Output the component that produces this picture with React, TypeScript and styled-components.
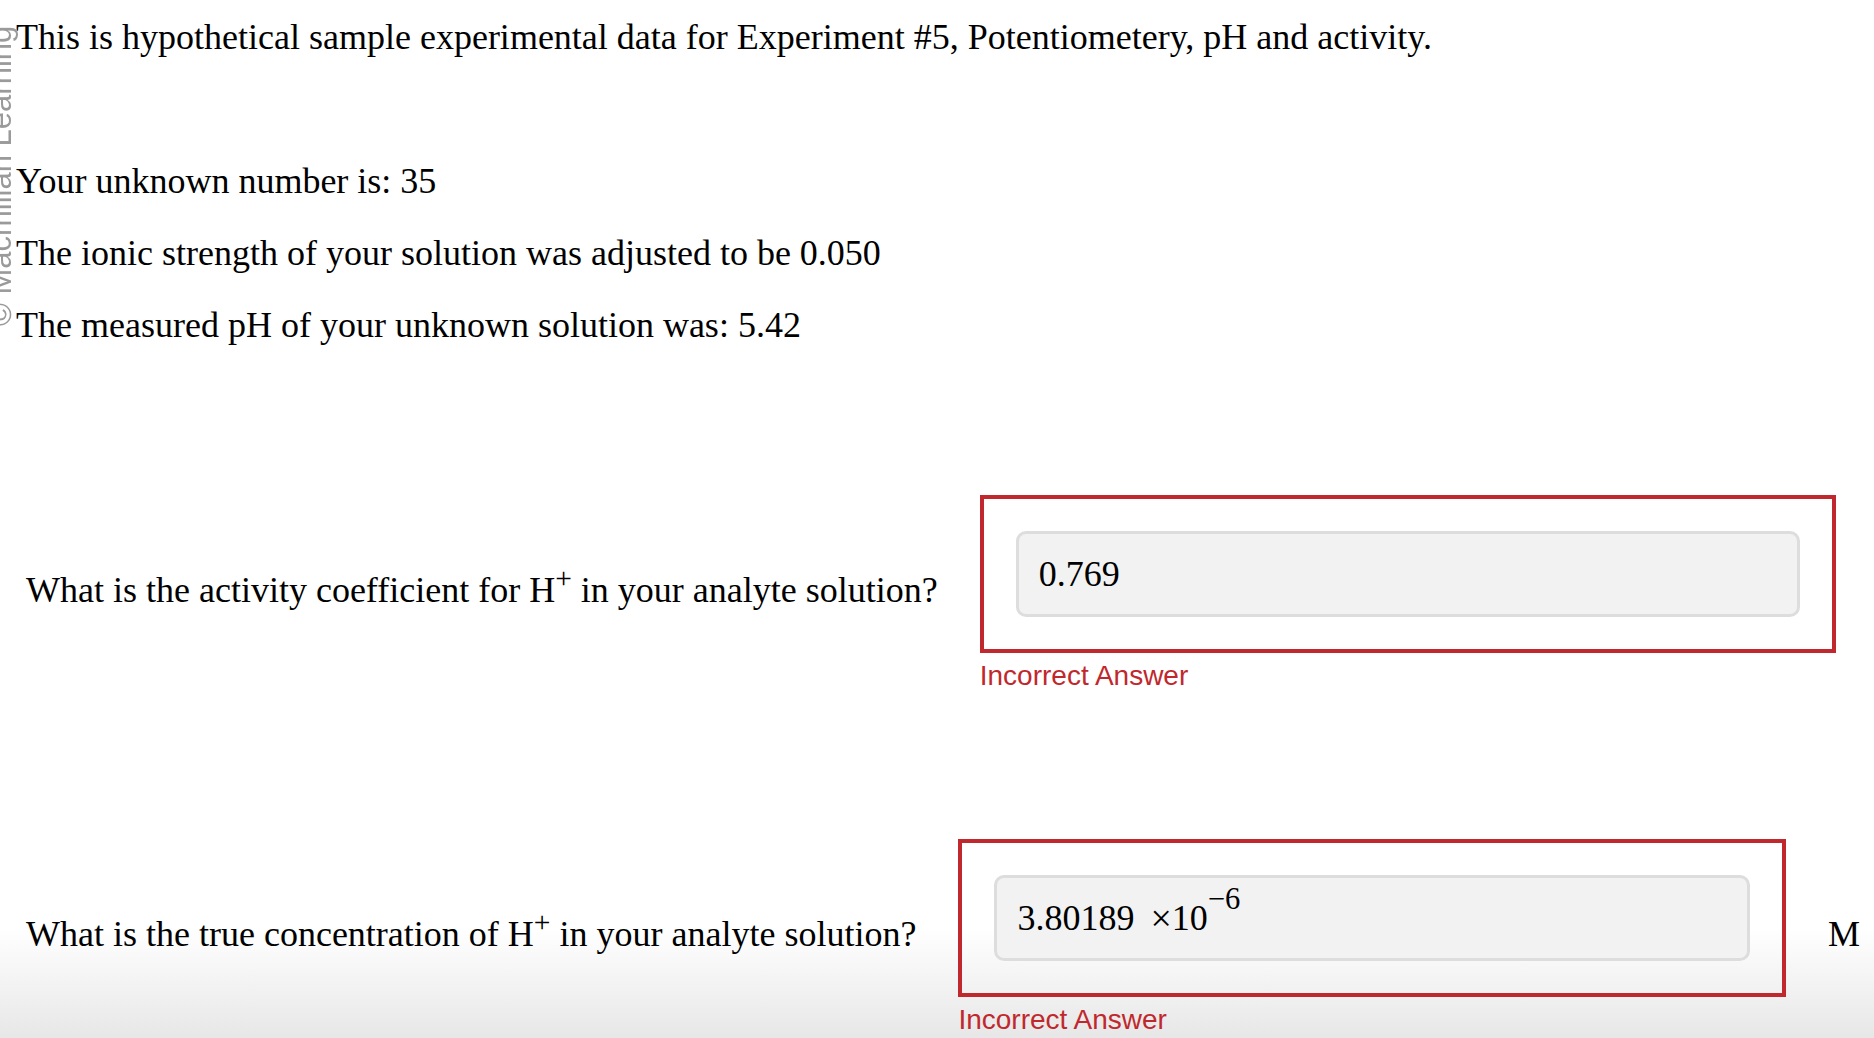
import React from "react";
import styled, { createGlobalStyle } from "styled-components";

const GlobalStyle = createGlobalStyle`
  html, body {
    margin: 0;
    padding: 0;
  }
  body {
    font-family: "Liberation Serif", "Times New Roman", serif;
    color: #000;
    background: linear-gradient(to bottom, #ffffff 0, #ffffff calc(100% - 110px), #e7e7e7 100%) fixed;
  }
`;

const Page = styled.div`
  position: relative;
  padding-top: 1px;
  font-size: 36px;
`;

const Watermark = styled.span`
  position: fixed;
  left: -15px;
  top: 326px;
  transform-origin: 0 0;
  transform: rotate(-90deg);
  font-family: "Liberation Sans", Arial, sans-serif;
  font-size: 31px;
  line-height: 31px;
  color: #9a9a9a;
  white-space: nowrap;
  pointer-events: none;
`;

const Intro = styled.div`
  padding-left: 16px;
`;

const Line = styled.p<{ $gapAfter?: boolean }>`
  margin: 0 0 ${(p) => (p.$gapAfter ? "72px" : "0")};
  line-height: 72px;
  white-space: nowrap;
`;

const QuestionList = styled.div`
  display: flex;
  flex-direction: column;
  gap: 148px;
  margin-top: 134px;
`;

const Row = styled.div<{ $padRight: number }>`
  display: flex;
  align-items: flex-start;
  gap: 42px;
  padding: 0 ${(p) => p.$padRight}px 0 26px;
`;

const Question = styled.div`
  flex-shrink: 0;
  padding-top: 75px;
  line-height: 40px;
  white-space: nowrap;
  font-variant-ligatures: common-ligatures;
`;

const Sup = styled.span`
  font-size: 0.82em;
  position: relative;
  top: -0.47em;
`;

const AnswerColumn = styled.div`
  flex: 1;
  display: flex;
  flex-direction: column;
`;

const AnswerBox = styled.div`
  border: 4px solid #c0282d;
  padding: 32px;
`;

const Field = styled.div`
  height: 80px;
  border: 3px solid #dddddd;
  border-radius: 10px;
  background: #f2f2f2;
  padding: 0 20px;
  display: flex;
  align-items: center;
  font-size: 36px;
  white-space: nowrap;
`;

const Times = styled.span`
  margin-left: 16px;
  font-size: 1.05em;
`;

const Exponent = styled.span`
  font-size: 0.85em;
  position: relative;
  top: -0.6em;
`;

const Feedback = styled.div`
  margin-top: 7px;
  font-family: "Liberation Sans", Arial, sans-serif;
  font-size: 28px;
  line-height: 31px;
  color: #c0282d;
`;

const Unit = styled.div`
  flex-shrink: 0;
  width: 30px;
  padding-top: 75px;
  line-height: 40px;
`;

const App = () => {
  return (
    <>
      <GlobalStyle />
      <Page>
        <Watermark>© Macmillan Learning</Watermark>
        <Intro>
          <Line $gapAfter>
            This is hypothetical sample experimental data for Experiment #5,
            Potentiometery, pH and activity.
          </Line>
          <Line>Your unknown number is: 35</Line>
          <Line>The ionic strength of your solution was adjusted to be 0.050</Line>
          <Line>The measured pH of your unknown solution was: 5.42</Line>
        </Intro>

        <QuestionList>
          <Row $padRight={38}>
            <Question>
              What is the activity coefficient for H<Sup>+</Sup> in your
              analyte solution?
            </Question>
            <AnswerColumn>
              <AnswerBox>
                <Field>0.769</Field>
              </AnswerBox>
              <Feedback>Incorrect Answer</Feedback>
            </AnswerColumn>
          </Row>

          <Row $padRight={16}>
            <Question>
              What is the true concentration of H<Sup>+</Sup> in your analyte
              solution?
            </Question>
            <AnswerColumn>
              <AnswerBox>
                <Field>
                  3.80189<Times>×</Times>10
                  <Exponent>−6</Exponent>
                </Field>
              </AnswerBox>
              <Feedback>Incorrect Answer</Feedback>
            </AnswerColumn>
            <Unit>M</Unit>
          </Row>
        </QuestionList>
      </Page>
    </>
  );
};

export default App;
